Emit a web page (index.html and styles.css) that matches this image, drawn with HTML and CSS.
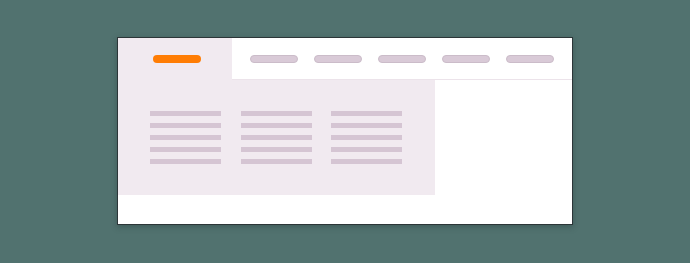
FILE: index.html
```html
<!DOCTYPE html>
<html lang="en">
<head>
    <meta charset="UTF-8">
    <meta name="viewport" content="width=device-width">
    <title>Layout</title>
    <link rel="stylesheet" href="styles.css">
</head>
<body>
<div id="app">
    <div class="window">
        <div class="header">
            <div class="logo"><span class="logo-pill"></span></div>
            <ul class="nav">
                <li></li>
                <li></li>
                <li></li>
                <li></li>
                <li></li>
            </ul>
        </div>
        <div class="main">
            <div class="panel">
                <ul class="col">
                    <li></li><li></li><li></li><li></li><li></li>
                </ul>
                <ul class="col">
                    <li></li><li></li><li></li><li></li><li></li>
                </ul>
                <ul class="col">
                    <li></li><li></li><li></li><li></li><li></li>
                </ul>
            </div>
        </div>
    </div>
</div>
</body>
</html>
```

FILE: styles.css
```css
*{
    margin: 0;
    padding: 0;
    box-sizing: border-box;
}
ul{
    list-style: none;
}
html,body,#app{
    width: 100%;
    height: 100%;
    overflow: hidden;
}
body{
    background-color: #51726f;
}
#app{
    padding: 37px 0 0 117px;
}
.window{
    width: 456px;
    height: 188px;
    background-color: #fff;
    border: 1px solid #2c3638;
    box-shadow: 0 2px 6px rgba(30,45,45,0.35);
    display: flex;
    flex-direction: column;
}
.header{
    display: flex;
    height: 42px;
}
.logo{
    width: 114px;
    background-color: #f1eaf0;
    padding: 17px 0 0 35px;
}
.logo-pill{
    display: block;
    width: 48px;
    height: 8px;
    border-radius: 4px;
    background-color: #ff7d04;
}
.nav{
    flex: 1;
    display: flex;
    gap: 16px;
    padding: 17px 0 0 18px;
    border-bottom: 1px solid #ece3ea;
}
.nav li{
    width: 48px;
    height: 8px;
    border-radius: 4px;
    background-color: #d9cad7;
    border: 1px solid #cbbcc9;
}
.main{
    flex: 1;
}
.panel{
    width: 317px;
    height: 115px;
    background-color: #f1eaf0;
    display: flex;
    gap: 19.5px;
    padding: 31px 0 0 32px;
}
.col{
    width: 71px;
    display: flex;
    flex-direction: column;
    gap: 7px;
}
.col li{
    height: 5px;
    background-color: #d5c5d3;
}
```
